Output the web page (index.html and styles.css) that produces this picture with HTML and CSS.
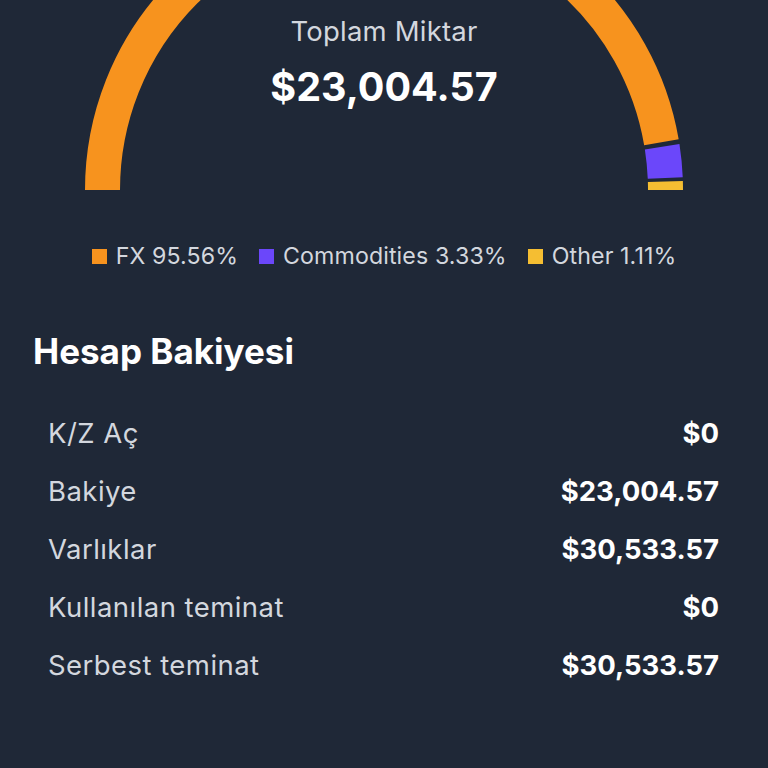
FILE: index.html
```html
<!DOCTYPE html>
<html lang="tr">
<head>
<meta charset="utf-8">
<link rel="stylesheet" href="styles.css">
</head>
<body>
<div class="gauge">
  <svg class="gauge-svg" width="768" height="190" viewBox="0 0 768 190">
    <g transform="rotate(180 384 190)" fill="none" stroke-width="35">
      <circle cx="384" cy="190" r="281.5" stroke="#F7931E" stroke-dasharray="836 2000" stroke-dashoffset="0"/>
      <circle cx="384" cy="190" r="281.5" stroke="#6B47FA" stroke-dasharray="31.5 2000" stroke-dashoffset="-840.5"/>
      <circle cx="384" cy="190" r="281.5" stroke="#F5BE32" stroke-dasharray="9 2000" stroke-dashoffset="-875.5"/>
    </g>
  </svg>
  <div class="gauge-text">
    <div class="gauge-label">Toplam Miktar</div>
    <div class="gauge-amount">$23,004.57</div>
  </div>
</div>
<div class="legend">
  <div class="legend-item"><span class="swatch swatch-fx"></span>FX 95.56%</div>
  <div class="legend-item"><span class="swatch swatch-com"></span>Commodities 3.33%</div>
  <div class="legend-item"><span class="swatch swatch-oth"></span>Other 1.11%</div>
</div>
<section class="balance">
  <h2 class="balance-title">Hesap Bakiyesi</h2>
  <div class="rows">
    <div class="row"><span class="row-label">K/Z Aç</span><span class="row-value">$0</span></div>
    <div class="row"><span class="row-label">Bakiye</span><span class="row-value">$23,004.57</span></div>
    <div class="row"><span class="row-label">Varlıklar</span><span class="row-value">$30,533.57</span></div>
    <div class="row"><span class="row-label">Kullanılan teminat</span><span class="row-value">$0</span></div>
    <div class="row"><span class="row-label">Serbest teminat</span><span class="row-value">$30,533.57</span></div>
  </div>
</section>
</body>
</html>
```
FILE: styles.css
```css
html, body {
  margin: 0;
  padding: 0;
}
body {
  background: #1F2837;
  font-family: Inter, "Noto Sans", sans-serif;
  color: #D3D7DE;
  width: 768px;
  height: 768px;
  overflow: hidden;
}
.gauge {
  display: grid;
  height: 190px;
}
.gauge-svg {
  grid-area: 1 / 1;
  display: block;
}
.gauge-text {
  grid-area: 1 / 1;
  display: flex;
  flex-direction: column;
  align-items: center;
  padding-top: 14px;
}
.gauge-label {
  font-size: 27.5px;
  line-height: 34px;
  letter-spacing: 0.2px;
  color: #D3D7DE;
}
.gauge-amount {
  margin-top: 17px;
  font-size: 39.5px;
  line-height: 44px;
  font-weight: 700;
  color: #FFFFFF;
}
.legend {
  display: flex;
  justify-content: center;
  gap: 21px;
  margin-top: 52px;
  font-size: 23.2px;
  line-height: 28px;
  letter-spacing: 0.1px;
  color: #D3D7DE;
}
.legend-item {
  display: flex;
  align-items: center;
  gap: 9px;
}
.swatch {
  width: 15px;
  height: 15px;
  display: inline-block;
}
.swatch-fx { background: #F7931E; }
.swatch-com { background: #6B47FA; }
.swatch-oth { background: #F5BE32; }
.balance {
  padding: 0 49px 0 33px;
  margin-top: 61px;
}
.balance-title {
  margin: 0;
  font-size: 35px;
  line-height: 40px;
  font-weight: 700;
  color: #FFFFFF;
}
.rows {
  margin-top: 44px;
  padding-left: 15px;
  display: flex;
  flex-direction: column;
  gap: 22px;
}
.row {
  display: flex;
  justify-content: space-between;
  align-items: center;
  font-size: 27.5px;
  line-height: 36px;
}
.row-label {
  color: #D3D7DE;
  letter-spacing: 0.45px;
}
.row-value {
  font-weight: 700;
  color: #FFFFFF;
}
```
